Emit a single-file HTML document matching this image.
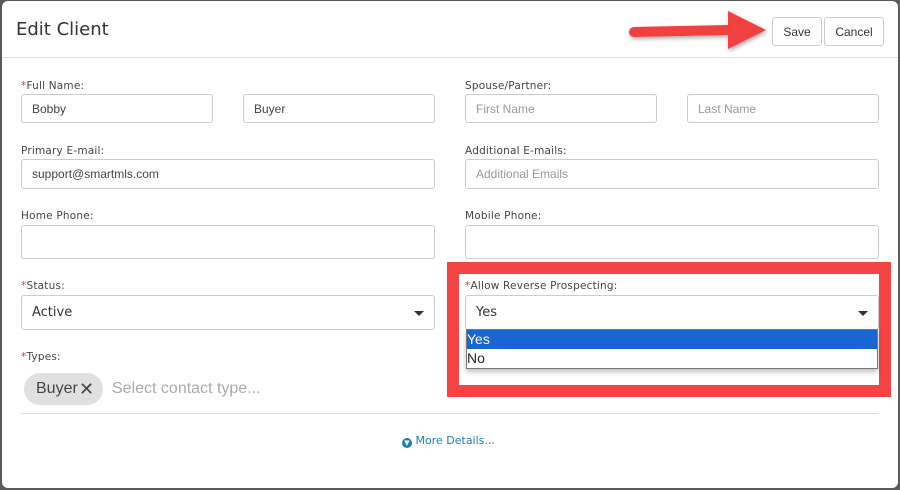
<!DOCTYPE html>
<html><head><style>
*{box-sizing:border-box;margin:0;padding:0}
body{width:900px;height:490px;background:#5a5a5a;position:relative;overflow:hidden;font-family:"Liberation Sans",Arial,sans-serif}
.m{position:absolute;left:2px;top:1px;width:896px;height:487px;background:#fff;border-radius:6px}
.a{position:absolute}
.lbl{position:absolute;color:#444;letter-spacing:.2px;font-family:"DejaVu Sans",sans-serif;font-size:10.5px}
.lbl b{color:#e33;font-weight:normal}
.in{position:absolute;border:1px solid #ccc;border-radius:3px;background:#fff;font-size:12px;color:#444;padding-left:10px;display:flex;align-items:center}
.ph{color:#999}
.btn{position:absolute;top:16px;height:29px;border:1px solid #ccc;border-radius:3px;font-size:12px;color:#333;display:flex;align-items:center;justify-content:center;background:#fff}
.caret{position:absolute;right:10px;top:50%;margin-top:-2px;width:0;height:0;border-left:5px solid transparent;border-right:5px solid transparent;border-top:5px solid #333}
</style></head><body>
<div class="m">
<div class="a" style="left:14px;top:18px;font-size:18px;color:#333;font-family:'DejaVu Sans',sans-serif">Edit Client</div>
<div class="a" style="left:0;top:56px;width:896px;height:1px;background:#ddd"></div>
<div class="btn" style="left:770px;width:50px">Save</div>
<div class="btn" style="left:822px;width:60px">Cancel</div>
</div>
<svg class="a" style="left:620px;top:8px" width="150" height="46"><defs><filter id="s"><feDropShadow dx="1" dy="2" stdDeviation="2" flood-opacity=".35"/></filter></defs><g filter="url(#s)" fill="#f04040"><path d="M14 19 L108 17 L108 3 L146 22 L108 41 L108 27 L14 29 A5 5 0 0 1 14 19Z"/></g></svg>

<div class="lbl" style="left:21px;top:80px"><b>*</b>Full Name:</div>
<div class="in" style="left:21px;top:94px;width:192px;height:29px">Bobby</div>
<div class="in" style="left:243px;top:94px;width:192px;height:29px">Buyer</div>
<div class="lbl" style="left:465px;top:80px">Spouse/Partner:</div>
<div class="in ph" style="left:465px;top:94px;width:192px;height:29px">First Name</div>
<div class="in ph" style="left:687px;top:94px;width:192px;height:29px">Last Name</div>

<div class="lbl" style="left:21px;top:145px">Primary E-mail:</div>
<div class="in" style="left:21px;top:159px;width:414px;height:30px">support@smartmls.com</div>
<div class="lbl" style="left:465px;top:145px">Additional E-mails:</div>
<div class="in ph" style="left:465px;top:159px;width:414px;height:30px">Additional Emails</div>

<div class="lbl" style="left:21px;top:210px">Home Phone:</div>
<div class="in" style="left:21px;top:225px;width:414px;height:34px"></div>
<div class="lbl" style="left:465px;top:210px">Mobile Phone:</div>
<div class="in" style="left:465px;top:225px;width:414px;height:34px"></div>

<div class="lbl" style="left:21px;top:280px"><b>*</b>Status:</div>
<div class="in" style="left:21px;top:295px;width:414px;height:35px;font-family:'DejaVu Sans',sans-serif;font-size:13px;color:#333">Active<span class="caret"></span></div>

<div class="lbl" style="left:21px;top:351px"><b>*</b>Types:</div>
<div class="a" style="left:24px;top:373px;width:79px;height:32px;border-radius:16px;background:#e0e0e0;font-size:16px;color:#444;padding-left:12px;line-height:32px">Buyer<span style="font-size:18px;position:absolute;left:55px;top:0">✕</span></div>
<div class="a" style="left:112px;top:380px;font-size:16px;color:#aaa">Select contact type...</div>
<div class="a" style="left:21px;top:413px;width:858px;height:1px;background:#ddd"></div>
<div class="a" style="left:402px;top:434px;font-size:11px;color:#1a7fb5;font-family:'DejaVu Sans',sans-serif"><span style="display:inline-block;width:10px;height:10px;border-radius:50%;background:#1a7fb5;color:#fff;font-size:7px;line-height:10px;text-align:center;vertical-align:-1px">&#9660;</span> More Details...</div>

<div class="a" style="left:447px;top:262px;width:444px;height:135px;background:#f44343"></div>
<div class="a" style="left:459px;top:274px;width:420px;height:111px;background:#fff"></div>
<div class="lbl" style="left:465px;top:280px"><b>*</b>Allow Reverse Prospecting:</div>
<div class="in" style="left:465px;top:295px;width:414px;height:35px;font-family:'DejaVu Sans',sans-serif;font-size:13px;color:#333">Yes<span class="caret"></span></div>
<div class="a" style="left:466px;top:329px;width:412px;height:40px;border:1px solid #777;background:#fff;box-shadow:0 3px 5px rgba(0,0,0,.25);font-size:14px;color:#222">
<div style="background:#1a66d0;color:#fff;height:19px;line-height:19px">Yes</div>
<div style="height:19px;line-height:19px">No</div></div>
</body></html>
